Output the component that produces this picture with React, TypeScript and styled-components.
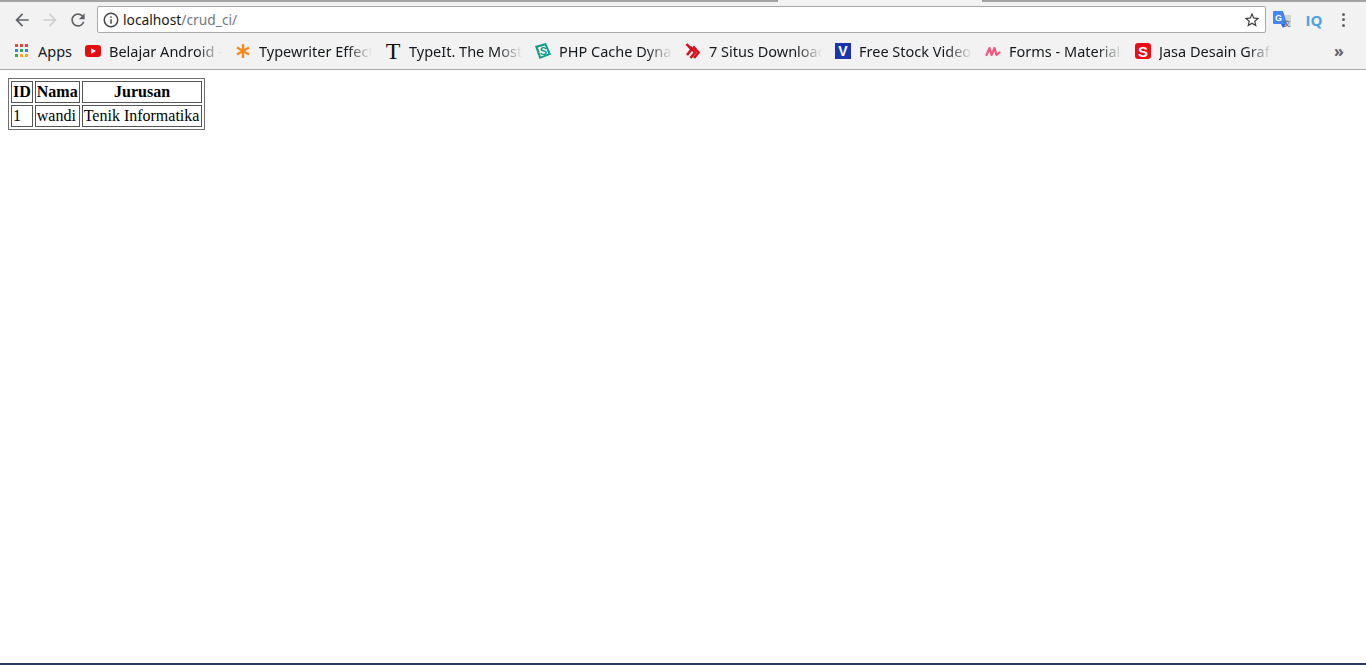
import styled, { createGlobalStyle } from 'styled-components'
import type { ReactNode } from 'react'

const GlobalStyle = createGlobalStyle`
  html, body {
    margin: 0;
    padding: 0;
    background: #ffffff;
    overflow: hidden;
  }
`

const Window = styled.div`
  display: flex;
  flex-direction: column;
  width: 1366px;
  height: 665px;
  overflow: hidden;
`

const TabStrip = styled.div`
  display: flex;
  height: 2px;
  background: #f2f2f2;
`

const TabEdge = styled.div<{ $width: number; $active?: boolean }>`
  width: ${({ $width }) => $width}px;
  flex: ${({ $width }) => ($width ? 'none' : 1)};
  box-sizing: border-box;
  height: 2px;
  background: ${({ $active }) => ($active ? '#f2f2f2' : '#a3a3a3')};
`

const Toolbar = styled.div`
  display: flex;
  align-items: center;
  height: 33px;
  padding: 2px 0 0 12px;
  box-sizing: border-box;
  background: #f2f2f2;
`

const NavButton = styled.button`
  display: flex;
  align-items: center;
  justify-content: center;
  width: 20px;
  height: 20px;
  margin-right: 8px;
  padding: 0;
  border: none;
  background: none;
  color: #5f6368;

  &:disabled {
    color: #d0d0d0;
  }

  svg {
    width: 20px;
    height: 20px;
    fill: currentColor;
  }
`

const Omnibox = styled.div`
  display: flex;
  align-items: center;
  width: 1169px;
  height: 27px;
  margin-left: 1px;
  box-sizing: border-box;
  padding: 0 4px 0 4px;
  background: #ffffff;
  border: 1px solid #a9a9a9;
  border-radius: 2px;
`

const SecurityIcon = styled.svg`
  width: 18px;
  height: 18px;
  fill: #444649;
  flex: none;
`

const Url = styled.span`
  margin-left: 3px;
  flex: 1;
  font: 13.8px 'Noto Sans', sans-serif;
  color: #75797d;
  white-space: nowrap;

  b {
    font-weight: 400;
    color: #1a1a1a;
  }
`

const StarIcon = styled.svg`
  width: 18px;
  height: 18px;
  fill: #3c3c3c;
  flex: none;
`

const Extensions = styled.div`
  display: flex;
  align-items: center;
  margin-left: 7px;
`

const TranslateBadge = styled.svg`
  width: 18px;
  height: 20px;
  margin-right: 14px;
`

const IqBadge = styled.span`
  width: 18px;
  margin-right: 19px;
  font: 700 15px 'Open Sans', sans-serif;
  color: #4aa3df;
  text-align: center;
`

const MenuDots = styled.div`
  display: flex;
  flex-direction: column;
  gap: 2.5px;

  i {
    width: 3px;
    height: 3px;
    border-radius: 50%;
    background: #5f6368;
  }
`

const BookmarkBar = styled.div`
  display: flex;
  align-items: center;
  height: 35px;
  padding: 0 0 3px 15px;
  box-sizing: border-box;
  background: #f2f2f2;
  border-bottom: 1px solid #a9a9a9;
  font: 14.5px 'Noto Sans', sans-serif;
  color: #16191c;
`

const AppsItem = styled.div`
  display: flex;
  align-items: center;
  gap: 9px;
  width: 70px;
  flex: none;
`

const AppsGrid = styled.div`
  display: grid;
  grid-template-columns: repeat(3, 3px);
  grid-auto-rows: 3px;
  gap: 2px;
  width: 14px;
`

const AppsDot = styled.i<{ $color: string }>`
  background: ${({ $color }) => $color};
`

const Bookmark = styled.div`
  display: flex;
  align-items: center;
  gap: 8px;
  width: 150px;
  flex: none;
`

const Favicon = styled.div`
  display: flex;
  align-items: center;
  justify-content: center;
  width: 16px;
  height: 16px;
  flex: none;

  svg {
    width: 16px;
    height: 16px;
    display: block;
  }
`

const SerifT = styled.span`
  font: 400 24px 'Liberation Serif', serif;
  line-height: 16px;
  color: #111111;
`

const BookmarkTitle = styled.span`
  width: 113px;
  overflow: hidden;
  white-space: nowrap;
  mask-image: linear-gradient(to right, #000 78%, transparent 100%);
`

const Chevrons = styled.span`
  margin-left: 49px;
  font-size: 16px;
  font-weight: 700;
  color: #5f6368;
  line-height: 16px;
`

const Page = styled.main`
  flex: 1;
  padding: 8px;
  background: #ffffff;
`

const DataTable = styled.table`
  border: 1px solid #707070;
  border-spacing: 2px;
  font: 16px 'Liberation Serif', serif;
  color: #000000;
`

const HeadCell = styled.th`
  border: 1px solid #555555;
  padding: 1px;
  font-weight: 700;
  text-align: center;
`

const BodyCell = styled.td<{ $wide?: boolean }>`
  border: 1px solid #555555;
  padding: ${({ $wide }) => ($wide ? '1px 2px 1px 1px' : '1px')};
`

const DesktopEdge = styled.div`
  height: 2px;
  flex: none;
  background: #2c3a66;
`

const appsColors = [
  '#e8453c', '#e8453c', '#e8453c',
  '#3b7de8', '#34a853', '#3b7de8',
  '#34a853', '#f9a825', '#f9a825',
]

const bookmarks: { title: string; icon: ReactNode }[] = [
  {
    title: 'Belajar Android - Tutorial',
    icon: (
      <svg viewBox="0 0 16 16">
        <rect x="0" y="2" width="16" height="12" rx="3" fill="#e60c12" />
        <path d="M6.2 5.2v5.6L11 8z" fill="#fff" />
      </svg>
    ),
  },
  {
    title: 'Typewriter Effect',
    icon: (
      <svg viewBox="0 0 16 16" stroke="#f58a1f" strokeWidth="2.4">
        <path d="M8 1v14M2 4.5l12 7M14 4.5l-12 7" />
      </svg>
    ),
  },
  {
    title: 'TypeIt. The Most',
    icon: <SerifT>T</SerifT>,
  },
  {
    title: 'PHP Cache Dynamic',
    icon: (
      <svg viewBox="0 0 16 16">
        <path d="M0 3L11 0 16 11.5 4.5 16z" fill="#0f9d8a" />
        <path d="M3 4.5L10 2.6 13.4 10.5 5.8 13.4z" fill="#fff" />
        <text x="8.3" y="12" fontSize="11" fontWeight="700" fontFamily="Liberation Sans, sans-serif" fill="#0f9d8a" textAnchor="middle">S</text>
      </svg>
    ),
  },
  {
    title: '7 Situs Download',
    icon: (
      <svg viewBox="0 0 16 16" fill="none" stroke="#d8101c" strokeWidth="2.6">
        <path d="M1.5 1l5 5.5-4.5 5.5" />
        <path d="M8 3.5l5.5 6-4.5 5.5" />
        <path d="M5 3.5l5 6-4.5 5.5" />
      </svg>
    ),
  },
  {
    title: 'Free Stock Video',
    icon: (
      <svg viewBox="0 0 16 16">
        <rect width="16" height="16" fill="#1a35ae" />
        <text x="8" y="13.2" fontSize="14" fontWeight="700" fontFamily="Liberation Sans, sans-serif" fill="#fff" textAnchor="middle">V</text>
      </svg>
    ),
  },
  {
    title: 'Forms - Materialize',
    icon: (
      <svg viewBox="0 0 16 16" fill="none" stroke="#f2567c" strokeWidth="2.2" strokeLinecap="round" strokeLinejoin="round">
        <path d="M1.5 12L4.5 5l2 7 3-7 2 7 3-2.5" />
      </svg>
    ),
  },
  {
    title: 'Jasa Desain Grafis',
    icon: (
      <svg viewBox="0 0 16 16">
        <rect width="16" height="16" rx="3" fill="#f00a14" />
        <text x="8" y="13.5" fontSize="15" fontWeight="700" fontFamily="Liberation Sans, sans-serif" fill="#fff" textAnchor="middle">S</text>
      </svg>
    ),
  },
]

export default function App() {
  return (
    <Window>
      <GlobalStyle />
      <TabStrip>
        <TabEdge $width={778} />
        <TabEdge $width={204} $active />
        <TabEdge $width={0} />
      </TabStrip>

      <Toolbar>
        <NavButton aria-label="Back">
          <svg viewBox="0 0 24 24">
            <path d="M20 11H7.83l5.59-5.59L12 4l-8 8 8 8 1.41-1.41L7.83 13H20v-2z" />
          </svg>
        </NavButton>
        <NavButton aria-label="Forward" disabled>
          <svg viewBox="0 0 24 24">
            <path d="M4 11h12.17l-5.59-5.59L12 4l8 8-8 8-1.41-1.41L16.17 13H4v-2z" />
          </svg>
        </NavButton>
        <NavButton aria-label="Reload">
          <svg viewBox="0 0 24 24">
            <path d="M17.65 6.35A7.958 7.958 0 0 0 12 4c-4.42 0-7.99 3.58-7.99 8s3.57 8 7.99 8c3.73 0 6.84-2.55 7.73-6h-2.08A5.99 5.99 0 0 1 12 18c-3.31 0-6-2.69-6-6s2.69-6 6-6c1.66 0 3.14.69 4.22 1.78L13 11h7V4l-2.35 2.35z" />
          </svg>
        </NavButton>
        <Omnibox>
          <SecurityIcon viewBox="0 0 24 24">
            <path d="M11 7h2v2h-2zm0 4h2v6h-2zm1-9a10 10 0 1 0 0 20 10 10 0 0 0 0-20zm0 18a8 8 0 1 1 0-16 8 8 0 0 1 0 16z" />
          </SecurityIcon>
          <Url>
            <b>localhost</b>/crud_ci/
          </Url>
          <StarIcon viewBox="0 0 24 24">
            <path d="M22 9.24l-7.19-.62L12 2 9.19 8.63 2 9.24l5.46 4.73L5.82 21 12 17.27 18.18 21l-1.63-7.03L22 9.24zM12 15.4l-3.76 2.27 1-4.28-3.32-2.88 4.38-.38L12 6.1l1.71 4.04 4.38.38-3.32 2.88 1 4.28L12 15.4z" />
          </StarIcon>
        </Omnibox>
        <Extensions>
          <TranslateBadge viewBox="0 0 18 20">
            <path d="M9 5h8a1 1 0 0 1 1 1v10a1 1 0 0 1-1 1H9z" fill="#d5d5d5" />
            <path d="M1 1h9l4 13H1a1 1 0 0 1-1-1V2a1 1 0 0 1 1-1z" fill="#4285f4" />
            <path d="M8 14h5l-3 4z" fill="#3367d6" />
            <text x="5.5" y="11" fontSize="9" fontWeight="700" fontFamily="Liberation Sans, sans-serif" fill="#fff" textAnchor="middle">G</text>
            <text x="14" y="16" fontSize="7" fontFamily="Noto Sans CJK SC, sans-serif" fill="#666" textAnchor="middle">文</text>
          </TranslateBadge>
          <IqBadge>IQ</IqBadge>
          <MenuDots>
            <i />
            <i />
            <i />
          </MenuDots>
        </Extensions>
      </Toolbar>

      <BookmarkBar>
        <AppsItem>
          <AppsGrid>
            {appsColors.map((color, i) => (
              <AppsDot key={i} $color={color} />
            ))}
          </AppsGrid>
          Apps
        </AppsItem>
        {bookmarks.map((item) => (
          <Bookmark key={item.title}>
            <Favicon>{item.icon}</Favicon>
            <BookmarkTitle>{item.title}</BookmarkTitle>
          </Bookmark>
        ))}
        <Chevrons>»</Chevrons>
      </BookmarkBar>

      <Page>
        <DataTable>
          <thead>
            <tr>
              <HeadCell>ID</HeadCell>
              <HeadCell>Nama</HeadCell>
              <HeadCell>Jurusan</HeadCell>
            </tr>
          </thead>
          <tbody>
            <tr>
              <BodyCell>1</BodyCell>
              <BodyCell>wandi</BodyCell>
              <BodyCell $wide>Tenik Informatika</BodyCell>
            </tr>
          </tbody>
        </DataTable>
      </Page>

      <DesktopEdge />
    </Window>
  )
}
